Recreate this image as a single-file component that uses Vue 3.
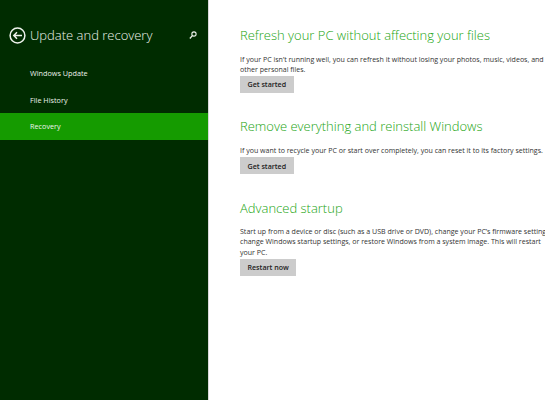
<template>
  <div class="screen">
    <aside class="side">
      <header class="side-head">
        <svg class="back" width="17" height="17" viewBox="0 0 17 17" fill="none" stroke="#eef3ec">
          <circle cx="8.5" cy="8.5" r="7.4" stroke-width="1.5" />
          <path d="M13 8.5H5M8 5.3L4.8 8.5 8 11.7" stroke-width="1.5" />
        </svg>
        <h1>Update and recovery</h1>
        <svg class="search" width="8" height="8" viewBox="0 0 9 9" fill="none" stroke="#eef3ec">
          <circle cx="5.6" cy="3.4" r="2.4" stroke-width="1.2" />
          <path d="M3.8 5.2L1 8.4" stroke-width="1.5" />
        </svg>
      </header>
      <nav class="menu">
        <a v-for="item in menu" :key="item" class="item" :class="{ active: item === current }">{{ item }}</a>
      </nav>
    </aside>

    <main class="content">
      <section v-for="s in sections" :key="s.title" class="block">
        <h2>{{ s.title }}</h2>
        <p v-html="s.text"></p>
        <button class="btn">{{ s.action }}</button>
      </section>
    </main>
  </div>
</template>

<script setup>
const menu = ['Windows Update', 'File History', 'Recovery']
const current = 'Recovery'

const sections = [
  {
    title: 'Refresh your PC without affecting your files',
    text: 'If your PC isn’t running well, you can refresh it without losing your photos, music, videos, and<br>other personal files.',
    action: 'Get started'
  },
  {
    title: 'Remove everything and reinstall Windows',
    text: 'If you want to recycle your PC or start over completely, you can reset it to its factory settings.',
    action: 'Get started'
  },
  {
    title: 'Advanced startup',
    text: 'Start up from a device or disc (such as a USB drive or DVD), change your PC’s firmware settings,<br>change Windows startup settings, or restore Windows from a system image. This will restart<br>your PC.',
    action: 'Restart now'
  }
]
</script>

<style scoped>
.screen { display: flex; width: 545px; height: 400px; overflow: hidden; font-family: "Open Sans", "Noto Sans", sans-serif; background: #fff; }
.side { flex: 0 0 208px; background: #002c00; color: #eef3ec; border-right: 1px solid #d8d8d8; }
.side-head { display: flex; align-items: center; height: 34px; padding: 18px 11px 0 9px; }
.back { flex: none; margin-right: 4px; }
.side-head h1 { flex: 1; margin: 0; font-size: 13px; font-weight: 300; white-space: nowrap; }
.search { flex: none; }
.menu { margin-top: 8px; }
.item { display: block; height: 26.5px; padding-left: 30px; font-size: 7.25px; line-height: 26px; }
.item.active { background: #159b00; }
.content { flex: 1; min-width: 0; padding: 25px 0 0 31px; }
.block { margin-bottom: 23.5px; white-space: nowrap; }
h2 { margin: 0 0 8.5px; font-size: 13px; line-height: 20px; font-weight: 300; color: #22a512; }
p { margin: 0 0 2px; font-size: 7.05px; line-height: 10.2px; color: #333; }
.btn { display: block; height: 17px; padding: 0 7.5px; border: 0; background: #ccc; color: #222; font: 600 7.1px "Open Sans", sans-serif; }
</style>
